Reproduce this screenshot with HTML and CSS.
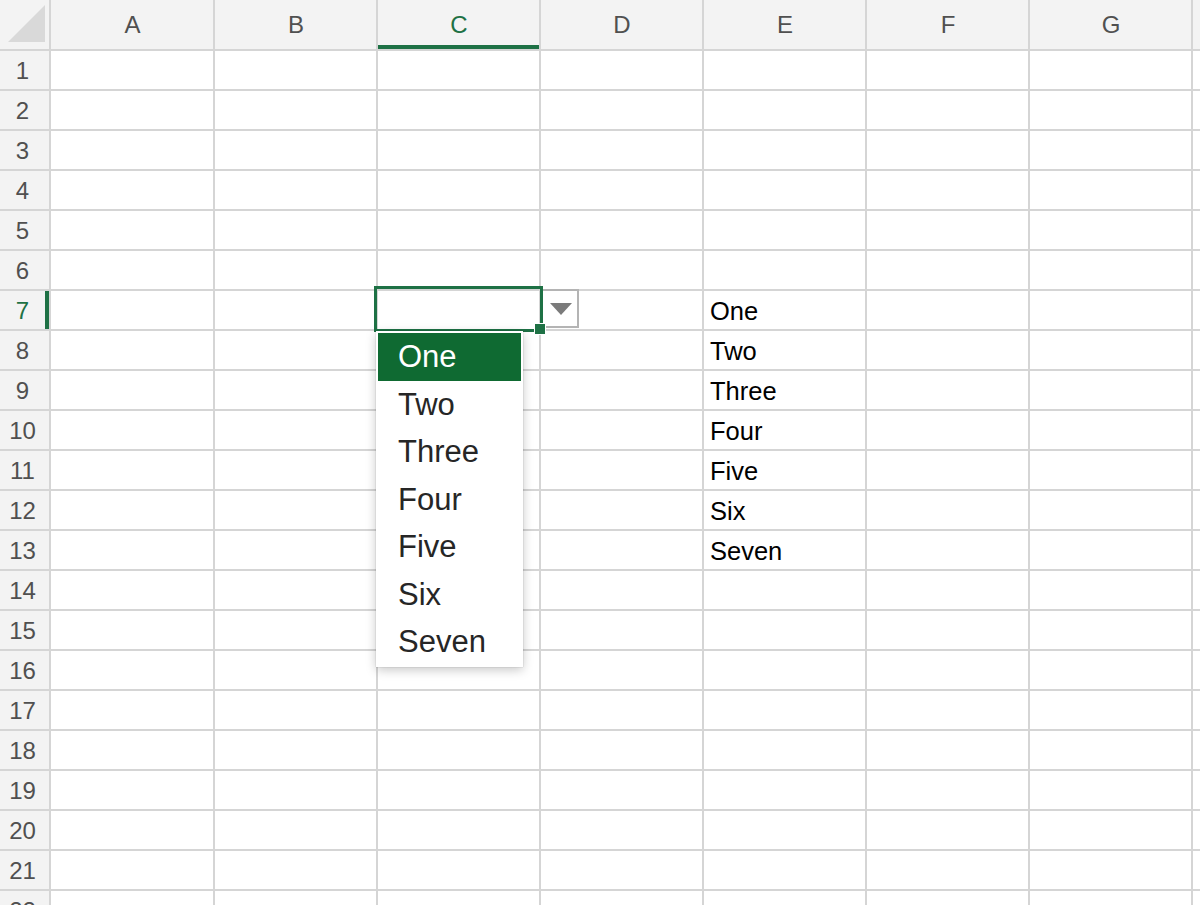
FILE: index.html
```html
<!DOCTYPE html>
<html lang="en">
<head>
    <meta charset="UTF-8">
    <title>Sheet1</title>
    <link rel="stylesheet" href="styles.css">
</head>
<body>
    <div class="sheet">
        <div class="corner">
            <svg width="49" height="49" viewBox="0 0 49 49"><polygon points="8,42 45,42 45,5" fill="#d9d9d9"/></svg>
        </div>
        <div class="ch">A</div><div class="ch">B</div><div class="ch active">C</div><div class="ch">D</div><div class="ch">E</div><div class="ch">F</div><div class="ch">G</div><div class="ch"></div>

        <div class="rh">1</div><div class="c"></div><div class="c"></div><div class="c"></div><div class="c"></div><div class="c"></div><div class="c"></div><div class="c"></div><div class="c"></div>
        <div class="rh">2</div><div class="c"></div><div class="c"></div><div class="c"></div><div class="c"></div><div class="c"></div><div class="c"></div><div class="c"></div><div class="c"></div>
        <div class="rh">3</div><div class="c"></div><div class="c"></div><div class="c"></div><div class="c"></div><div class="c"></div><div class="c"></div><div class="c"></div><div class="c"></div>
        <div class="rh">4</div><div class="c"></div><div class="c"></div><div class="c"></div><div class="c"></div><div class="c"></div><div class="c"></div><div class="c"></div><div class="c"></div>
        <div class="rh">5</div><div class="c"></div><div class="c"></div><div class="c"></div><div class="c"></div><div class="c"></div><div class="c"></div><div class="c"></div><div class="c"></div>
        <div class="rh">6</div><div class="c"></div><div class="c"></div><div class="c"></div><div class="c"></div><div class="c"></div><div class="c"></div><div class="c"></div><div class="c"></div>
        <div class="rh active">7</div><div class="c"></div><div class="c"></div>
        <div class="c selected">
            <div class="sel-box"></div>
            <div class="fill-handle"></div>
            <div class="dd-button">
                <svg width="22" height="12" viewBox="0 0 22 12"><polygon points="0,0 22,0 11,12" fill="#7b7b7b"/></svg>
            </div>
            <ul class="dd-list">
                <li class="hl">One</li>
                <li>Two</li>
                <li>Three</li>
                <li>Four</li>
                <li>Five</li>
                <li>Six</li>
                <li>Seven</li>
            </ul>
        </div>
        <div class="c"></div><div class="c">One</div><div class="c"></div><div class="c"></div><div class="c"></div>
        <div class="rh">8</div><div class="c"></div><div class="c"></div><div class="c"></div><div class="c"></div><div class="c">Two</div><div class="c"></div><div class="c"></div><div class="c"></div>
        <div class="rh">9</div><div class="c"></div><div class="c"></div><div class="c"></div><div class="c"></div><div class="c">Three</div><div class="c"></div><div class="c"></div><div class="c"></div>
        <div class="rh">10</div><div class="c"></div><div class="c"></div><div class="c"></div><div class="c"></div><div class="c">Four</div><div class="c"></div><div class="c"></div><div class="c"></div>
        <div class="rh">11</div><div class="c"></div><div class="c"></div><div class="c"></div><div class="c"></div><div class="c">Five</div><div class="c"></div><div class="c"></div><div class="c"></div>
        <div class="rh">12</div><div class="c"></div><div class="c"></div><div class="c"></div><div class="c"></div><div class="c">Six</div><div class="c"></div><div class="c"></div><div class="c"></div>
        <div class="rh">13</div><div class="c"></div><div class="c"></div><div class="c"></div><div class="c"></div><div class="c">Seven</div><div class="c"></div><div class="c"></div><div class="c"></div>
        <div class="rh">14</div><div class="c"></div><div class="c"></div><div class="c"></div><div class="c"></div><div class="c"></div><div class="c"></div><div class="c"></div><div class="c"></div>
        <div class="rh">15</div><div class="c"></div><div class="c"></div><div class="c"></div><div class="c"></div><div class="c"></div><div class="c"></div><div class="c"></div><div class="c"></div>
        <div class="rh">16</div><div class="c"></div><div class="c"></div><div class="c"></div><div class="c"></div><div class="c"></div><div class="c"></div><div class="c"></div><div class="c"></div>
        <div class="rh">17</div><div class="c"></div><div class="c"></div><div class="c"></div><div class="c"></div><div class="c"></div><div class="c"></div><div class="c"></div><div class="c"></div>
        <div class="rh">18</div><div class="c"></div><div class="c"></div><div class="c"></div><div class="c"></div><div class="c"></div><div class="c"></div><div class="c"></div><div class="c"></div>
        <div class="rh">19</div><div class="c"></div><div class="c"></div><div class="c"></div><div class="c"></div><div class="c"></div><div class="c"></div><div class="c"></div><div class="c"></div>
        <div class="rh">20</div><div class="c"></div><div class="c"></div><div class="c"></div><div class="c"></div><div class="c"></div><div class="c"></div><div class="c"></div><div class="c"></div>
        <div class="rh">21</div><div class="c"></div><div class="c"></div><div class="c"></div><div class="c"></div><div class="c"></div><div class="c"></div><div class="c"></div><div class="c"></div>
        <div class="rh">22</div><div class="c"></div><div class="c"></div><div class="c"></div><div class="c"></div><div class="c"></div><div class="c"></div><div class="c"></div><div class="c"></div>
    </div>
</body>
</html>
```

FILE: styles.css
```css
body, html {
    margin: 0;
    padding: 0;
    height: 100%;
    overflow: hidden;
    background-color: #ffffff;
    font-family: 'Liberation Sans', Arial, sans-serif;
}
.sheet {
    display: grid;
    grid-template-columns: 49px 162px repeat(6, 161px) 1fr;
    grid-template-rows: 49px;
    grid-auto-rows: 38px;
    gap: 2px;
    background-color: #d5d5d5;
}
.corner {
    background-color: #f3f3f3;
}
.corner svg {
    display: block;
}
.ch {
    background-color: #f3f3f3;
    color: #505050;
    font-size: 24px;
    display: flex;
    align-items: center;
    justify-content: center;
    padding-left: 1px;
}
.ch.active {
    color: #1e7145;
    box-shadow: inset 0 -4px 0 #1e7145;
}
.rh {
    background-color: #f3f3f3;
    color: #505050;
    font-size: 24px;
    display: flex;
    align-items: center;
    justify-content: center;
    padding: 2px 4px 0 0;
}
.rh.active {
    color: #1e7145;
    box-shadow: inset -4px 0 0 #1e7145;
}
.c {
    background-color: #ffffff;
    color: #000000;
    font-size: 25.5px;
    display: flex;
    align-items: center;
    padding: 3px 0 0 6px;
}
.selected {
    position: relative;
}
.sel-box {
    position: absolute;
    left: -4px;
    top: -5px;
    right: -4px;
    bottom: -3px;
    border: 3px solid #1e7145;
}
.fill-handle {
    position: absolute;
    right: -7px;
    bottom: -6px;
    width: 10px;
    height: 10px;
    background-color: #1e7145;
    border: 1px solid #ffffff;
    z-index: 3;
}
.dd-button {
    position: absolute;
    left: 165px;
    top: -2px;
    width: 34px;
    height: 35px;
    background-color: #ffffff;
    border: 2px solid #b4b4b4;
    border-left: none;
    display: flex;
    align-items: center;
    justify-content: center;
}
.dd-button svg {
    display: block;
    margin-left: 1px;
}
.dd-list {
    position: absolute;
    left: -2px;
    top: 40px;
    width: 143px;
    margin: 0;
    padding: 2px 2px 1px 2px;
    list-style: none;
    background-color: #ffffff;
    box-shadow: 0 3px 10px rgba(0, 0, 0, 0.22), 0 0 1px rgba(0, 0, 0, 0.3);
    z-index: 2;
}
.dd-list li {
    height: 47.5px;
    line-height: 47.5px;
    padding-left: 20px;
    font-size: 31px;
    color: #262626;
}
.dd-list li.hl {
    background-color: #0f6a32;
    color: #ffffff;
}
```
